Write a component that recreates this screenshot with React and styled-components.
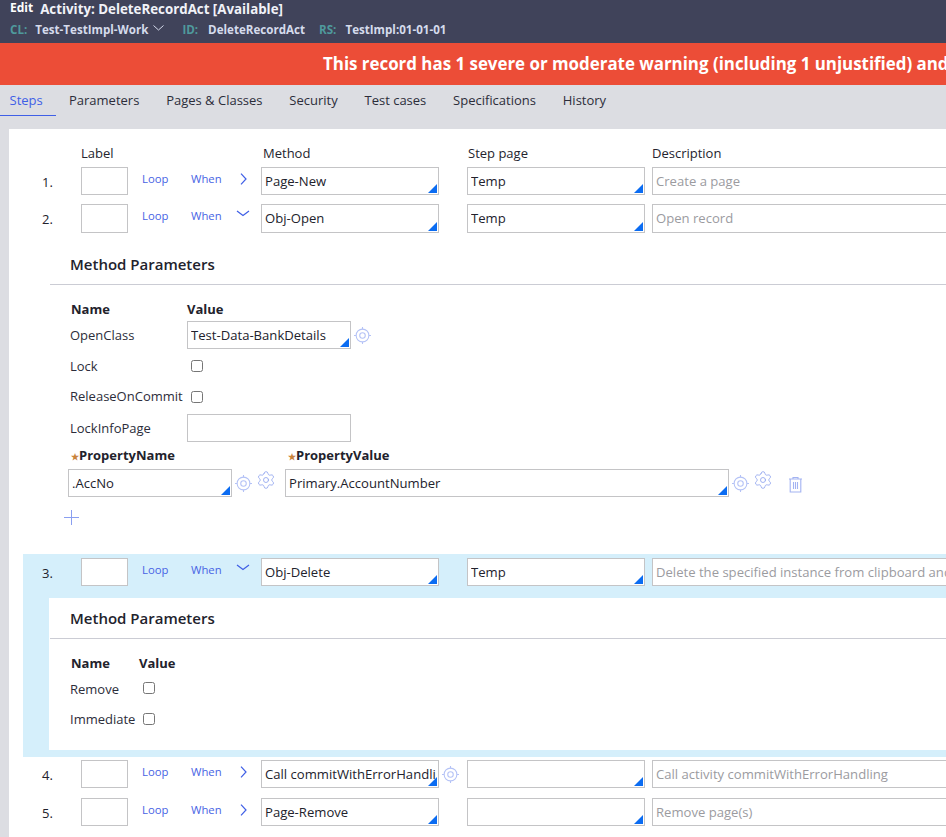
import React from "react";
import styled, { createGlobalStyle } from "styled-components";
import { Settings } from "lucide-react";

const Global = createGlobalStyle`
  html, body { margin: 0; padding: 0; background: #dcdde2; }
  body { font-family: "Open Sans", "Liberation Sans", sans-serif; font-size: 13px; color: #22222c; }
  #root { width: 946px; height: 837px; overflow: hidden; }
`;

const Page = styled.div`
  width: 946px;
  height: 837px;
  overflow: hidden;
  background: #dcdde2;
`;

const Header = styled.header`
  height: 43px;
  box-sizing: border-box;
  background: #40435a;
  padding: 0 0 0 10px;
  white-space: nowrap;
`;

const TitleRow = styled.div`
  display: flex;
  align-items: center;
  height: 17px;
  gap: 7px;
  color: #fff;
  font-weight: 700;
`;
const EditText = styled.span`font-size: 12px; position: relative; top: -1px;`;
const TitleText = styled.span`font-size: 13.3px; color: #f1f2f8;`;

const MetaRow = styled.div`
  display: flex;
  align-items: center;
  height: 24px;
  font-size: 11.6px;
  font-weight: 700;
`;
const MetaKey = styled.span`
  color: #4f9a9d;
  margin-left: ${(p) => p.$gap || 0}px;
  margin-right: ${(p) => p.$after}px;
`;
const MetaValue = styled.span`color: #d5dbec;`;

const Banner = styled.div`
  height: 42px;
  box-sizing: border-box;
  background: #ec4d37;
  color: #fff;
  font-size: 16.9px;
  font-weight: 700;
  line-height: 42px;
  padding-left: 323px;
  white-space: nowrap;
  overflow: hidden;
`;

const Tabs = styled.nav`
  display: flex;
  height: 31px;
  background: #dcdde2;
`;
const Tab = styled.div`
  box-sizing: border-box;
  height: 31px;
  line-height: 31px;
  padding: 0 ${(p) => (p.$first ? 12.9 : 13.4)}px 0 ${(p) => (p.$first ? 9.5 : 13.4)}px;
  color: ${(p) => (p.$active ? "#3f5fe6" : "#2c2d3a")};
  border-bottom: 1px solid ${(p) => (p.$active ? "#3f5fe6" : "transparent")};
`;

const Sheet = styled.main`
  margin: 13px 0 0 9px;
  background: #fff;
  height: 708px;
  padding: 14px 0 0 14px;
  overflow: hidden;
`;

const ColumnHeads = styled.div`
  display: flex;
  height: 24px;
  line-height: 20px;
  color: #24242e;
`;
const ColumnHead = styled.div`
  width: ${(p) => p.$w}px;
  flex: none;
  padding-left: ${(p) => p.$pad || 0}px;
  box-sizing: border-box;
`;

const Step = styled.section`
  width: 923px;
  margin-top: ${(p) => p.$top || 0}px;
  padding: ${(p) => (p.$active ? "4px 0 7px" : "0")};
  background: ${(p) => (p.$active ? "#d5effb" : "transparent")};
`;
const StepRow = styled.div`
  display: flex;
  align-items: center;
  height: ${(p) => p.$h || 28}px;
`;
const StepNo = styled.div`
  width: 58px;
  flex: none;
  padding-left: 19px;
  box-sizing: border-box;
  position: relative;
  top: 1px;
  color: #22222c;
`;
const LinkBox = styled.div`
  width: 133px;
  flex: none;
  display: flex;
  align-items: center;
  height: 100%;
  position: relative;
`;
const StepLink = styled.a`
  font-size: 11.3px;
  color: #4763e4;
  width: ${(p) => p.$w}px;
  margin-left: ${(p) => p.$left || 0}px;
  flex: none;
  position: relative;
  top: -2.5px;
`;
const Chevron = styled.svg`
  flex: none;
  margin-left: ${(p) => p.$left}px;
  position: relative;
  top: ${(p) => p.$top}px;
`;
const Gap = styled.div`
  width: ${(p) => p.$w}px;
  flex: none;
  display: flex;
  align-items: center;
`;

const FieldBox = styled.div`
  position: relative;
  flex: none;
  width: ${(p) => p.$w}px;
  height: ${(p) => p.$h || 28}px;
`;
const Field = styled.input`
  display: block;
  width: 100%;
  height: 100%;
  box-sizing: border-box;
  border: 1px solid #c4c4c6;
  background: #fff;
  outline: none;
  margin: 0;
  padding: 0 ${(p) => (p.$smart ? 2 : 3)}px 0 3px;
  font: 13.1px "Open Sans", "Liberation Sans", sans-serif;
  color: #22222c;
  &::placeholder { color: #9b9b9f; opacity: 1; }
`;
const Corner = styled.span`
  position: absolute;
  right: 2px;
  bottom: 2px;
  width: 0;
  height: 0;
  border-style: solid;
  border-width: 0 0 9px 9px;
  border-color: transparent transparent #0b6cf2 transparent;
`;

const Panel = styled.div`
  margin: ${(p) => p.$top}px 0 0 26px;
  background: #fff;
  height: ${(p) => p.$h}px;
`;
const PanelTitle = styled.h3`
  margin: 0 0 0 1px;
  height: 41px;
  box-sizing: border-box;
  border-bottom: 1px solid #cbccd4;
  padding-left: 20px;
  line-height: 40px;
  font-size: 15px;
  font-weight: 600;
  color: #22222c;
`;
const ParamGrid = styled.div`
  display: grid;
  grid-template-columns: ${(p) => p.$name}px 1fr;
  grid-auto-rows: auto;
  padding: 15px 0 0 21px;
  align-items: center;
`;
const ParamHead = styled.div`
  font-weight: 700;
  color: #22222c;
  height: ${(p) => p.$h}px;
  line-height: 18px;
  padding-left: ${(p) => p.$pad || 0}px;
  align-self: start;
`;
const ParamName = styled.div`
  color: #2c2d3a;
  white-space: nowrap;
  height: ${(p) => (p.$h ? `${p.$h}px` : "auto")};
  line-height: ${(p) => (p.$h ? `${p.$h}px` : "normal")};
  margin-top: ${(p) => p.$mt || 0}px;
  margin-bottom: ${(p) => p.$mb || 0}px;
`;
const ParamValue = styled.div`
  display: flex;
  align-items: center;
  height: ${(p) => (p.$h ? `${p.$h}px` : "auto")};
  margin-top: ${(p) => p.$mt || 0}px;
  margin-bottom: ${(p) => p.$mb || 0}px;
`;
const Check = styled.input.attrs({ type: "checkbox" })`
  margin: 0 0 0 3.5px;
  width: 12px;
  height: 12px;
  position: relative;
  top: ${(p) => p.$top || 0}px;
`;
const PropGrid = styled.div`
  display: grid;
  grid-template-columns: 217px 1fr;
  padding: 2px 0 0 19px;
`;
const PropHead = styled.div`
  font-weight: 700;
  height: 25px;
  line-height: 22px;
  padding-left: 3px;
  color: #22222c;
`;
const Star = styled.span`
  color: #c9833c;
  font-size: 9px;
`;
const PropCell = styled.div`
  display: flex;
  align-items: center;
`;
const TargetSvg = styled.svg`
  flex: none;
  margin-left: 3px;
`;
const Gear = styled(Settings)`
  flex: none;
  margin-left: 4px;
  position: relative;
  top: -3px;
  color: #8fa3ee;
`;
const TrashSvg = styled.svg`
  flex: none;
  margin-left: 15px;
  position: relative;
  top: 1px;
`;
const PlusSvg = styled.svg`
  display: block;
  margin: 13px 0 0 15px;
`;

const Target = () => (
  <TargetSvg width="17" height="17" viewBox="0 0 16 16" fill="none" stroke="#b4c2f6" strokeWidth="1">
    <circle cx="8" cy="8" r="6" />
    <circle cx="8" cy="8" r="2.6" />
    <path d="M8 0v2M8 14v2M0 8h2M14 8h2" />
  </TargetSvg>
);
const Trash = () => (
  <TrashSvg width="15" height="17" viewBox="0 0 15 17" fill="none" stroke="#a3b3f2" strokeWidth="1.1">
    <path d="M1 3h13M5 3V1.5h5V3M2.2 3v13h10.6V3" />
    <path d="M5.5 6v7M7.5 6v7M9.5 6v7" />
  </TrashSvg>
);
const Right = () => (
  <Chevron $left={15} $top={-2} width="7" height="12" viewBox="0 0 7 12" fill="none" stroke="#3f5fe6" strokeWidth="1.2">
    <path d="M1 .7 6 6l-5 5.3" />
  </Chevron>
);
const Down = () => (
  <Chevron $left={11} $top={-5} width="14" height="7" viewBox="0 0 14 7" fill="none" stroke="#3f5fe6" strokeWidth="1.2">
    <path d="M1 1l6 4.6L13 1" />
  </Chevron>
);

const Smart = ({ w, h, value }) => (
  <FieldBox $w={w} $h={h}>
    <Field $smart defaultValue={value} />
    <Corner />
  </FieldBox>
);

const Row = ({ n, h, open, method, page, desc, target }) => (
  <StepRow $h={h}>
    <StepNo>{n}.</StepNo>
    <FieldBox $w={47} $h={h}><Field /></FieldBox>
    <LinkBox>
      <StepLink $left={14} $w={49}>Loop</StepLink>
      <StepLink $w={34}>When</StepLink>
      {open ? <Down /> : <Right />}
    </LinkBox>
    <Smart w={178} h={h} value={method} />
    <Gap $w={28}>{target && <Target />}</Gap>
    <Smart w={178} h={h} value={page} />
    <Gap $w={7} />
    <FieldBox $w={420} $h={h}><Field placeholder={desc} /></FieldBox>
  </StepRow>
);

export default function App() {
  return (
    <Page>
      <Global />
      <Header>
        <TitleRow>
          <EditText>Edit</EditText>
          <TitleText>Activity: DeleteRecordAct [Available]</TitleText>
        </TitleRow>
        <MetaRow>
          <MetaKey $after={8}>CL:</MetaKey>
          <MetaValue>Test-TestImpl-Work</MetaValue>
          <Chevron $left={5} $top={-1} width="11" height="6" viewBox="0 0 11 6" fill="none" stroke="#d5dbec" strokeWidth="1">
            <path d="M.5.5l5 4.5 5-4.5" />
          </Chevron>
          <MetaKey $gap={18} $after={10}>ID:</MetaKey>
          <MetaValue>DeleteRecordAct</MetaValue>
          <MetaKey $gap={14} $after={9}>RS:</MetaKey>
          <MetaValue>TestImpl:01-01-01</MetaValue>
        </MetaRow>
      </Header>
      <Banner>This record has 1 severe or moderate warning (including 1 unjustified) and</Banner>
      <Tabs>
        <Tab $first $active>Steps</Tab>
        <Tab>Parameters</Tab>
        <Tab>Pages &amp; Classes</Tab>
        <Tab>Security</Tab>
        <Tab>Test cases</Tab>
        <Tab>Specifications</Tab>
        <Tab>History</Tab>
      </Tabs>
      <Sheet>
        <ColumnHeads>
          <ColumnHead $w={238} $pad={58}>Label</ColumnHead>
          <ColumnHead $w={206} $pad={2}>Method</ColumnHead>
          <ColumnHead $w={185} $pad={1}>Step page</ColumnHead>
          <ColumnHead $w={200}>Description</ColumnHead>
        </ColumnHeads>
        <Step>
          <Row n={1} method="Page-New" page="Temp" desc="Create a page" />
        </Step>
        <Step $top={9}>
          <Row n={2} h={28.5} open method="Obj-Open" page="Temp" desc="Open record" />
          <Panel $top={11.5} $h={310}>
            <PanelTitle>Method Parameters</PanelTitle>
            <ParamGrid $name={117}>
              <ParamHead $h={21} $pad={1}>Name</ParamHead>
              <ParamHead $h={21}>Value</ParamHead>
              <ParamName>OpenClass</ParamName>
              <ParamValue>
                <Smart w={164} value="Test-Data-BankDetails" />
                <Target />
              </ParamValue>
              <ParamName $h={30} $mt={2}>Lock</ParamName>
              <ParamValue $h={30} $mt={2}><Check /></ParamValue>
              <ParamName $h={31} $mb={2}>ReleaseOnCommit</ParamName>
              <ParamValue $h={31} $mb={2}><Check /></ParamValue>
              <ParamName>LockInfoPage</ParamName>
              <ParamValue>
                <FieldBox $w={164}><Field /></FieldBox>
              </ParamValue>
            </ParamGrid>
            <PropGrid>
              <PropHead><Star>★</Star>PropertyName</PropHead>
              <PropHead><Star>★</Star>PropertyValue</PropHead>
              <PropCell>
                <Smart w={164} value=".AccNo" />
                <Target />
                <Gear size={20} strokeWidth={1} />
              </PropCell>
              <PropCell>
                <Smart w={444} value="Primary.AccountNumber" />
                <Target />
                <Gear size={20} strokeWidth={1} />
                <Trash />
              </PropCell>
            </PropGrid>
            <PlusSvg width="15" height="15" viewBox="0 0 15 15" fill="none" stroke="#8a9ff0" strokeWidth="1">
              <path d="M7.5 0v15M0 7.5h15" />
            </PlusSvg>
          </Panel>
        </Step>
        <Step $active>
          <Row n={3} open method="Obj-Delete" page="Temp" desc="Delete the specified instance from clipboard and database" />
          <Panel $top={12} $h={152}>
            <PanelTitle>Method Parameters</PanelTitle>
            <ParamGrid $name={69}>
              <ParamHead $h={20} $pad={1}>Name</ParamHead>
              <ParamHead $h={20}>Value</ParamHead>
              <ParamName $h={30}>Remove</ParamName>
              <ParamValue $h={30}><Check $top={-1} /></ParamValue>
              <ParamName $h={30}>Immediate</ParamName>
              <ParamValue $h={30}><Check /></ParamValue>
            </ParamGrid>
          </Panel>
        </Step>
        <Step $top={3}>
          <Row n={4} target method="Call commitWithErrorHandling" page="" desc="Call activity commitWithErrorHandling" />
        </Step>
        <Step $top={10}>
          <Row n={5} method="Page-Remove" page="" desc="Remove page(s)" />
        </Step>
      </Sheet>
    </Page>
  );
}
